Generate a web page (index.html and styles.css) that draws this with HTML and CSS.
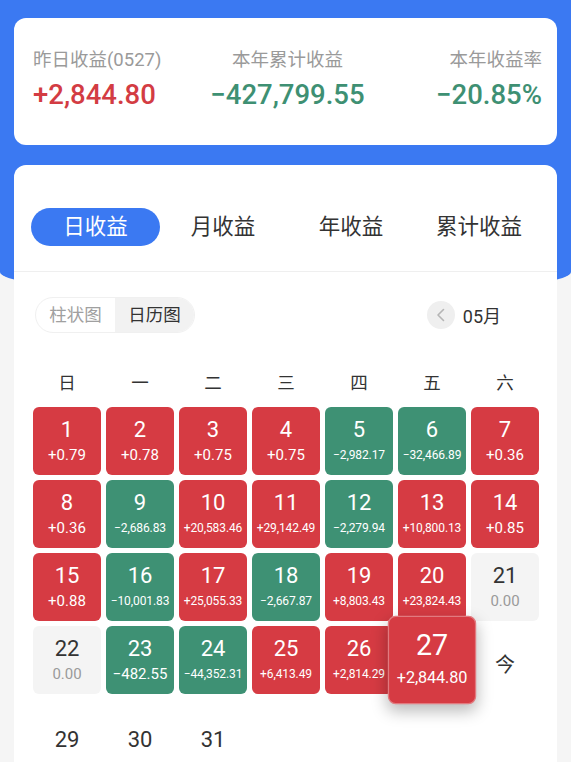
FILE: index.html
```html
<!DOCTYPE html>
<html lang="zh-CN">
<head>
    <meta charset="UTF-8">
    <meta name="viewport" content="width=device-width, initial-scale=1.0">
    <title>收益日历</title>
    <link rel="stylesheet" href="styles.css">
</head>
<body>
    <div class="page">
        <section class="summary">
            <div class="stat">
                <p class="stat-label">昨日收益(0527)</p>
                <p class="stat-value up">+2,844.80</p>
            </div>
            <div class="stat center">
                <p class="stat-label">本年累计收益</p>
                <p class="stat-value down">−427,799.55</p>
            </div>
            <div class="stat right">
                <p class="stat-label">本年收益率</p>
                <p class="stat-value down">−20.85%</p>
            </div>
        </section>

        <section class="panel">
            <nav class="tabs">
                <span class="tab active">日收益</span>
                <span class="tab">月收益</span>
                <span class="tab">年收益</span>
                <span class="tab">累计收益</span>
            </nav>

            <div class="toolbar">
                <div class="segment">
                    <span class="seg-item">柱状图</span>
                    <span class="seg-item selected">日历图</span>
                </div>
                <div class="month-nav">
                    <span class="arrow">
                        <svg width="28" height="28" viewBox="0 0 28 28"><polyline points="16.5,8.5 11,14 16.5,19.5" fill="none" stroke="#b5b5b5" stroke-width="1.6" stroke-linecap="round" stroke-linejoin="round"/></svg>
                    </span>
                    <span class="month">05月</span>
                    <span class="arrow hidden"></span>
                </div>
            </div>

            <div class="weekdays">
                <span>日</span><span>一</span><span>二</span><span>三</span><span>四</span><span>五</span><span>六</span>
            </div>

            <div class="calendar">
                <div class="cell up"><span class="day">1</span><span class="val">+0.79</span></div>
                <div class="cell up"><span class="day">2</span><span class="val">+0.78</span></div>
                <div class="cell up"><span class="day">3</span><span class="val">+0.75</span></div>
                <div class="cell up"><span class="day">4</span><span class="val">+0.75</span></div>
                <div class="cell down"><span class="day">5</span><span class="val sm">−2,982.17</span></div>
                <div class="cell down"><span class="day">6</span><span class="val sm">−32,466.89</span></div>
                <div class="cell up"><span class="day">7</span><span class="val">+0.36</span></div>

                <div class="cell up"><span class="day">8</span><span class="val">+0.36</span></div>
                <div class="cell down"><span class="day">9</span><span class="val sm">−2,686.83</span></div>
                <div class="cell up"><span class="day">10</span><span class="val sm">+20,583.46</span></div>
                <div class="cell up"><span class="day">11</span><span class="val sm">+29,142.49</span></div>
                <div class="cell down"><span class="day">12</span><span class="val sm">−2,279.94</span></div>
                <div class="cell up"><span class="day">13</span><span class="val sm">+10,800.13</span></div>
                <div class="cell up"><span class="day">14</span><span class="val">+0.85</span></div>

                <div class="cell up"><span class="day">15</span><span class="val">+0.88</span></div>
                <div class="cell down"><span class="day">16</span><span class="val sm">−10,001.83</span></div>
                <div class="cell up"><span class="day">17</span><span class="val sm">+25,055.33</span></div>
                <div class="cell down"><span class="day">18</span><span class="val sm">−2,667.87</span></div>
                <div class="cell up"><span class="day">19</span><span class="val sm">+8,803.43</span></div>
                <div class="cell up"><span class="day">20</span><span class="val sm">+23,824.43</span></div>
                <div class="cell flat"><span class="day">21</span><span class="val">0.00</span></div>

                <div class="cell flat"><span class="day">22</span><span class="val">0.00</span></div>
                <div class="cell down"><span class="day">23</span><span class="val">−482.55</span></div>
                <div class="cell down"><span class="day">24</span><span class="val sm">−44,352.31</span></div>
                <div class="cell up"><span class="day">25</span><span class="val sm">+6,413.49</span></div>
                <div class="cell up"><span class="day">26</span><span class="val sm">+2,814.29</span></div>
                <div class="cell up active"><span class="day">27</span><span class="val sm">+2,844.80</span></div>
                <div class="cell today"><span class="day">今</span></div>

                <div class="cell future"><span class="day">29</span></div>
                <div class="cell future"><span class="day">30</span></div>
                <div class="cell future"><span class="day">31</span></div>
            </div>
        </section>
    </div>
</body>
</html>
```

FILE: styles.css
```css
body {
    margin: 0;
    padding: 0;
    background-color: #f5f5f5;
    font-family: Roboto, "Noto Sans CJK SC", sans-serif;
    color: #333;
    overflow: hidden;
}

p {
    margin: 0;
}

.page {
    position: relative;
    padding: 18px 14px 0;
}

/* blue band behind the top cards */
.page::before {
    content: "";
    position: absolute;
    top: 0;
    left: 0;
    right: 0;
    height: 296px;
    background-color: #3b79f2;
    border-radius: 0 0 50% 50% / 0 0 24px 24px;
    z-index: -1;
}

.summary {
    display: grid;
    grid-template-columns: 1fr 1fr 1fr;
    height: 127px;
    box-sizing: border-box;
    padding: 29px 15px 0 19px;
    background-color: white;
    border-radius: 12px;
}

.stat.center {
    text-align: center;
}

.stat.right {
    text-align: right;
}

.stat-label {
    font-size: 18.5px;
    line-height: 26px;
    color: #9a9a9a;
    white-space: nowrap;
}

.stat-value {
    margin-top: 6px;
    font-size: 27.5px;
    line-height: 32px;
    font-weight: 500;
    white-space: nowrap;
}

.up {
    color: #d33c43;
}

.down {
    color: #3e9073;
}

.panel {
    margin-top: 20px;
    background-color: white;
    border-radius: 12px 12px 0 0;
    height: 640px;
}

.tabs {
    display: grid;
    grid-template-columns: repeat(4, 128px);
    padding: 43px 14px 25px 17px;
    border-bottom: 1px solid #efefef;
}

.tab {
    height: 38px;
    line-height: 38px;
    text-align: center;
    font-size: 21.5px;
    color: #333;
}

.tab.active {
    background-color: #3b79f2;
    color: white;
    border-radius: 19px;
    margin-right: -1px;
}

.toolbar {
    display: flex;
    justify-content: space-between;
    align-items: center;
    margin-top: 25px;
    padding: 0 20px 0 21px;
}

.segment {
    display: flex;
    height: 36px;
    border: 1px solid #f0f0f0;
    border-radius: 18px;
    overflow: hidden;
    box-sizing: border-box;
}

.seg-item {
    width: 79px;
    line-height: 34px;
    text-align: center;
    font-size: 17.5px;
    color: #a0a0a0;
}

.seg-item.selected {
    background-color: #f2f2f2;
    color: #333;
}

.month-nav {
    display: flex;
    align-items: center;
    gap: 8px;
}

.arrow {
    display: block;
    width: 28px;
    height: 28px;
    border-radius: 50%;
    background-color: #efefef;
}

.arrow svg {
    display: block;
}

.arrow.hidden {
    visibility: hidden;
}

.month {
    font-size: 18px;
    color: #333;
}

.weekdays {
    display: grid;
    grid-template-columns: repeat(7, 1fr);
    column-gap: 5px;
    margin-top: 38px;
    padding: 0 18px 0 19px;
}

.weekdays span {
    text-align: center;
    font-size: 17.5px;
    line-height: 24px;
    color: #333;
}

.calendar {
    display: grid;
    grid-template-columns: repeat(7, 1fr);
    grid-auto-rows: 68px;
    gap: 5px;
    margin-top: 12px;
    padding: 0 18px 0 19px;
}

.cell {
    display: flex;
    flex-direction: column;
    align-items: center;
    justify-content: center;
    gap: 4px;
    border-radius: 6px;
    color: white;
}

.cell.up {
    background-color: #d63b43;
}

.cell.down {
    background-color: #3e9174;
}

.cell.flat {
    background-color: #f4f4f4;
    color: #333;
}

.cell.flat .val {
    color: #9a9a9a;
}

.day {
    font-size: 22px;
    line-height: 24px;
}

.val {
    font-size: 15px;
    line-height: 18px;
    white-space: nowrap;
}

.val.sm {
    font-size: 12px;
    letter-spacing: -0.1px;
}

.cell.active {
    position: relative;
    z-index: 2;
    transform: scale(1.3);
    border: 1px solid #e27a7f;
    box-sizing: border-box;
    box-shadow: 0 5px 12px rgba(0, 0, 0, 0.28);
}

.cell.active .val.sm {
    font-size: 12.5px;
}

.cell.today {
    color: #333;
    padding-top: 10px;
}

.cell.today .day {
    font-size: 20px;
}

.cell.future {
    justify-content: flex-start;
    padding-top: 29px;
    color: #333;
}
```
